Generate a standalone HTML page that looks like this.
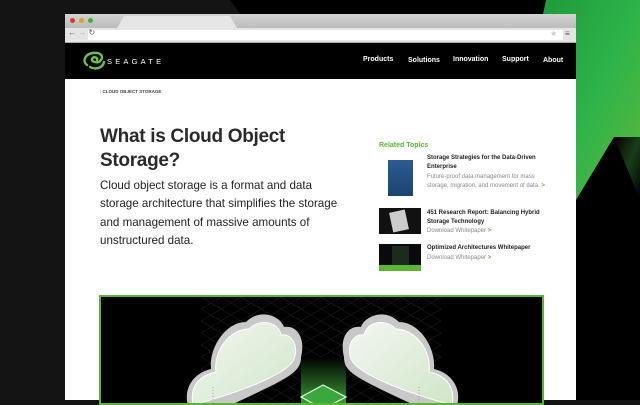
<!DOCTYPE html>
<html><head><meta charset="utf-8"><style>
*{margin:0;padding:0;box-sizing:border-box}
body{width:640px;height:400px;overflow:hidden;background:#141414;position:relative;font-family:"Liberation Sans",Arial,sans-serif}
.a{position:absolute}
.nav span{position:absolute;top:56px;color:#fff;font-size:7px;font-weight:bold}
.rt{position:absolute;left:427px;font-size:6px;line-height:8.5px}
.t{font-weight:bold;color:#222}
.d{color:#888}
.g{color:#5cb531;font-weight:bold}
</style></head><body>
<svg class="a" style="left:0;top:0" width="640" height="400">
<defs>
<linearGradient id="gr" x1="0" y1="0" x2="1" y2="1"><stop offset="0" stop-color="#1f9a3a"/><stop offset="0.5" stop-color="#2db34a"/><stop offset="1" stop-color="#5cb83a"/></linearGradient>
<linearGradient id="pk" x1="0" y1="0" x2="1" y2="1"><stop offset="0" stop-color="#000"/><stop offset="0.5" stop-color="#1a3d1a"/><stop offset="1" stop-color="#000"/></linearGradient>
</defs>
<polygon points="230,0 640,0 640,400 576,400 576,14 240,14" fill="#000"/>
<polygon points="546,0 640,0 640,137 614,137 576,200 576,14 543,14" fill="url(#gr)"/>
<polygon points="614,137 640,137 640,200" fill="url(#pk)"/>
</svg>
<div class="a" style="left:65px;top:14px;width:511px;height:386px;background:#fff;overflow:hidden">
 <div class="a" style="left:0;top:0;width:511px;height:14px;background:linear-gradient(#d2d2d2,#bcbcbc)"></div>
 <div class="a" style="left:52px;top:2px;width:120px;height:12px;background:#e6e6e6;clip-path:polygon(6% 0,94% 0,100% 100%,0 100%)"></div>
 <div class="a" style="left:5px;top:4px;width:5px;height:5px;border-radius:50%;background:#e5332a"></div>
 <div class="a" style="left:14px;top:4px;width:5px;height:5px;border-radius:50%;background:#e0a020"></div>
 <div class="a" style="left:23px;top:4px;width:5px;height:5px;border-radius:50%;background:#3cb043"></div>
 <div class="a" style="left:0;top:14px;width:511px;height:15px;background:#e4e4e4;border-bottom:1px solid #aaa"></div>
 <div class="a" style="left:23px;top:16px;width:475px;height:10px;background:#fff;border-radius:2px"></div>
 <div class="a" style="left:3px;top:14px;font-size:8px;color:#555">← <span style="color:#aaa">→</span> ↻</div>
 <div class="a" style="left:500px;top:15px;font-size:8px;color:#555">≡</div>
 <div class="a" style="left:485px;top:15px;font-size:8px;color:#ccc">★</div>
 <div class="a" style="left:0;top:29px;width:511px;height:36px;background:#000"></div>
 <svg class="a" style="left:17px;top:37px" width="24" height="20" viewBox="0 0 24 20"><path d="M5 14 C0 10 3 3 11 2 C18 1 22 5 19 9 C16 13 9 11 10 8 C11 5 16 6 15 9 M8 16 C13 19 21 17 22 11" fill="none" stroke="#6cc24a" stroke-width="2.4" stroke-linecap="round"/></svg>
 <div class="a" style="left:42px;top:43px;color:#fff;font-size:7.5px;letter-spacing:3.2px">SEAGATE</div>
 <div class="nav"><span style="left:298px;top:42px">Products</span><span style="left:343px;top:43px">Solutions</span><span style="left:388px;top:42px">Innovation</span><span style="left:437px;top:42px">Support</span><span style="left:478px;top:43px">About</span></div>
 <div class="a" style="left:35px;top:75px;font-size:4.5px;color:#444;font-weight:bold"><span style="color:#ccc">| </span>CLOUD OBJECT STORAGE</div>
 <div class="a" style="left:35px;top:111px;width:250px;font-size:19px;font-weight:bold;line-height:24px;color:#2a2a2a;letter-spacing:-0.3px">What is Cloud Object Storage?</div>
 <div class="a" style="left:35px;top:163px;width:245px;font-size:11.6px;line-height:18.3px;color:#222">Cloud object storage is a format and data storage architecture that simplifies the storage and management of massive amounts of unstructured data.</div>
 <div class="a g" style="left:314px;top:128px;font-size:7px">Related Topics</div>
 <div class="a" style="left:323px;top:146px;width:25px;height:36px;background:linear-gradient(#2a5d8f,#1c4470)"></div>
 <div class="a" style="left:314px;top:194px;width:42px;height:26px;background:#111"><div class="a" style="left:12px;top:3px;width:16px;height:20px;background:#ccc;transform:rotate(-12deg)"></div></div>
 <div class="a" style="left:314px;top:230px;width:42px;height:27px;background:#0a0a0a"><div class="a" style="left:13px;top:2px;width:17px;height:22px;background:#1d2a1d"></div><div class="a" style="left:0;top:21px;width:42px;height:6px;background:#5cb531"></div></div>
</div>
<div class="rt" style="top:154px"><div class="t">Storage Strategies for the Data-Driven<br>Enterprise</div><div class="d" style="margin-top:2px">Future-proof data management for mass<br>storage, migration, and movement of data. <span class="g">&gt;</span></div></div>
<div class="rt" style="top:209px"><div class="t">451 Research Report: Balancing Hybrid<br>Storage Technology</div><div class="d" style="margin-top:1px">Download Whitepaper <span class="g">&gt;</span></div></div>
<div class="rt" style="top:244px"><div class="t">Optimized Architectures Whitepaper</div><div class="d" style="margin-top:1px">Download Whitepaper <span class="g">&gt;</span></div></div>
<div class="a" style="left:99px;top:295px;width:445px;height:110px;background:#000;border:2px solid #5cb531;overflow:hidden">
 <svg width="445" height="110">
 <defs>
  <linearGradient id="cl" x1="0" y1="0" x2="1" y2="1"><stop offset="0" stop-color="#f4f6f2"/><stop offset="1" stop-color="#cfe6c8"/></linearGradient>
  <linearGradient id="bm" x1="0" y1="0" x2="0" y2="1"><stop offset="0" stop-color="#000"/><stop offset="1" stop-color="#3fa53a"/></linearGradient>
  <pattern id="gd" width="20" height="12" patternUnits="userSpaceOnUse"><path d="M0 0 L20 12 M20 0 L0 12" stroke="#1c1c1c" stroke-width="0.6"/></pattern>
 </defs>
 <rect x="100" y="0" width="240" height="110" fill="url(#gd)"/>
 <rect x="200" y="60" width="45" height="50" fill="url(#bm)"/>
 <path d="M88 112 C80 90 95 75 110 72 C108 50 125 25 145 25 C160 10 180 20 183 30 C195 28 205 40 200 60 C200 75 190 80 130 108 Z" fill="#c8c8c8"/>
 <path d="M92 108 C88 88 100 78 115 75 C112 55 128 32 148 32 C160 20 178 26 180 38 C190 36 198 48 193 62 C188 75 150 92 92 108 Z" fill="url(#cl)" stroke="#fff" stroke-width="1"/>
 <path d="M355 112 C363 90 348 75 333 72 C335 50 318 25 298 25 C283 10 263 20 260 30 C248 28 238 40 243 60 C243 75 253 80 313 108 Z" fill="#c8c8c8"/>
 <path d="M351 108 C355 88 343 78 328 75 C331 55 315 32 295 32 C283 20 265 26 263 38 C253 36 245 48 250 62 C255 75 293 92 351 108 Z" fill="url(#cl)" stroke="#fff" stroke-width="1"/>
 <path d="M200 100 L222 88 L245 100 L222 112 Z" fill="#3aa83a" stroke="#dfd" stroke-width="1.2"/>
 <path d="M112 90 V110 M318 90 V110" stroke="#aaa" stroke-dasharray="1 2"/>
 </svg>
</div>
</body></html>
